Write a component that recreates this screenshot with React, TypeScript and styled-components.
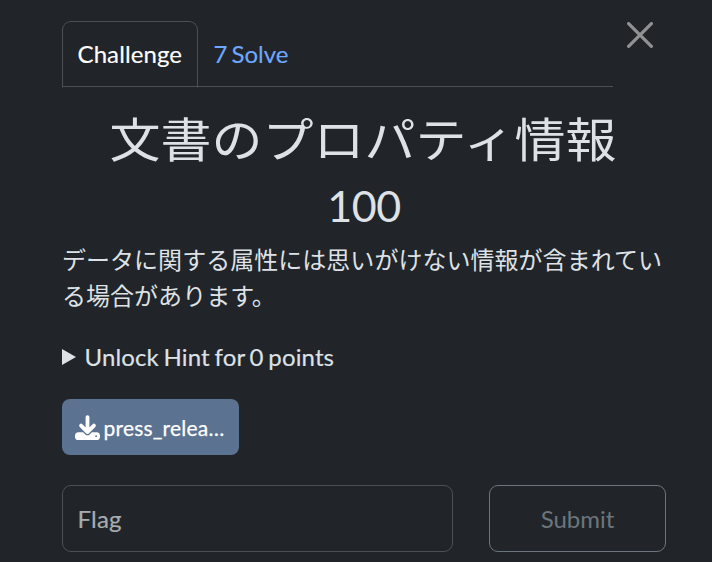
import React from 'react';
import styled, { createGlobalStyle } from 'styled-components';

const Global = createGlobalStyle`
  * { box-sizing: border-box; }
  body { margin: 0; background: #212529; color: #dee2e6; font-family: Lato, "Noto Sans CJK JP", sans-serif; font-size: 24px; line-height: 36px; overflow: hidden; }
`;
const Modal = styled.main`
  width: 712px; height: 562px; padding: 21px 46px 0 62px; overflow: hidden;
`;
const Header = styled.header`
  display: flex; justify-content: space-between; align-items: flex-start; height: 67px;
`;
const Tabs = styled.nav`
  display: flex; width: 551px; height: 66px; border-bottom: 1px solid #495057;
`;
const Tab = styled.a<{ $active?: boolean }>`
  height: 67px; padding: ${p => (p.$active ? '14px 14px 16px 14.5px' : '14px 14.500px')};
  width: ${p => (p.$active ? '136px' : 'auto')};
  white-space: nowrap;
  border: 1px solid ${p => (p.$active ? '#495057' : 'transparent')};
  border-bottom-color: ${p => (p.$active ? '#212529' : 'transparent')};
  border-radius: 9px 9px 0 0;
  color: ${p => (p.$active ? '#fff' : '#6ea8fe')};
  letter-spacing: ${p => (p.$active ? '0.1px' : '0')};
  word-spacing: -2px;
  -webkit-text-stroke: 0.15px currentColor;
`;
const Close = styled.button`
  margin: 1px 13px 0 0; padding: 0; border: 0; background: none; color: #909294; line-height: 0;
`;
const Title = styled.h2`
  margin: 21px 2px 0 0; font-size: 51px; line-height: 61px; font-weight: 400; text-align: center; white-space: nowrap;
  transform: scaleY(0.91);
`;
const Points = styled.h3`
  margin: 10px 0 0; font-size: 43px; line-height: 51px; font-weight: 400; text-align: center;
  letter-spacing: -0.4px;
`;
const Description = styled.p`
  margin: 11px 0 0; white-space: nowrap; letter-spacing: 0.03px;
`;
const Hint = styled.details`
  margin-top: 25px;
`;
const Summary = styled.summary`
  display: flex; align-items: center; gap: 8.5px; list-style: none;
  letter-spacing: 0.12px; word-spacing: -1.5px;
  -webkit-text-stroke: 0.15px currentColor;
  &::-webkit-details-marker { display: none; }
`;
const Download = styled.a`
  display: flex; align-items: center; gap: 4px; width: 177px; height: 56px; margin-top: 24px; padding: 0 12.5px;
  border-radius: 8px; background: #5b7290; color: #fff; font-size: 21px;
`;
const FileName = styled.span`
  padding-top: 1px; letter-spacing: 0.2px; white-space: nowrap;
  -webkit-text-stroke: 0.25px currentColor;
`;
const Form = styled.form`
  display: grid; grid-template-columns: 391px 177px; gap: 36px; margin-top: 30px;
`;
const Flag = styled.input`
  width: 100%; height: 67px; padding: 0 14.5px; border: 1px solid #495057; border-radius: 9px; background: #212529; font: inherit;
  &::placeholder { color: #a7acb0; letter-spacing: 0.2px; -webkit-text-stroke: 0.2px currentColor; }
`;
const Submit = styled.button`
  height: 67px; padding: 0 8px; border: 1px solid #6c757d; border-radius: 9px; background: none; color: #6c757d; font: inherit;
`;

export default function App() {
  return (
    <>
      <Global />
      <Modal>
        <Header>
          <Tabs><Tab $active>Challenge</Tab><Tab>7 Solve</Tab></Tabs>
          <Close aria-label="Close">
            <svg width="26" height="26" viewBox="0 0 16 16" fill="currentColor"><path d="M.293.293a1 1 0 0 1 1.414 0L8 6.586 14.293.293a1 1 0 1 1 1.414 1.414L9.414 8l6.293 6.293a1 1 0 0 1-1.414 1.414L8 9.414l-6.293 6.293a1 1 0 0 1-1.414-1.414L6.586 8 .293 1.707a1 1 0 0 1 0-1.414z" /></svg>
          </Close>
        </Header>
        <Title>文書のプロパティ情報</Title>
        <Points>100</Points>
        <Description>データに関する属性には思いがけない情報が含まれてい<br />る場合があります。</Description>
        <Hint>
          <Summary>
            <svg width="14" height="16" viewBox="0 0 14 16" fill="currentColor"><path d="M0 0v16l14-8z" /></svg>
            <span>Unlock Hint for 0 points</span>
          </Summary>
        </Hint>
        <Download>
          <svg width="25" height="25" viewBox="0 0 512 512" fill="currentColor">
            <path d="M64 352c-35.300 0-64 28.700-64 64v32c0 35.300 28.700 64 64 64H448c35.300 0 64-28.700 64-64V416c0-35.300-28.700-64-64-64H346.500l-45.300 45.300c-25 25-65.500 25-90.500 0L165.500 352H64zm368 64a18 18 0 1 1 0 36 18 18 0 1 1 0-36z" />
            <path d="M256 42v295M124 218l132 132 132-132" fill="none" stroke="currentColor" strokeWidth="78" strokeLinecap="round" strokeLinejoin="round" />
          </svg>
          <FileName>press_relea…</FileName>
        </Download>
        <Form>
          <Flag placeholder="Flag" />
          <Submit type="button">Submit</Submit>
        </Form>
      </Modal>
    </>
  );
}
